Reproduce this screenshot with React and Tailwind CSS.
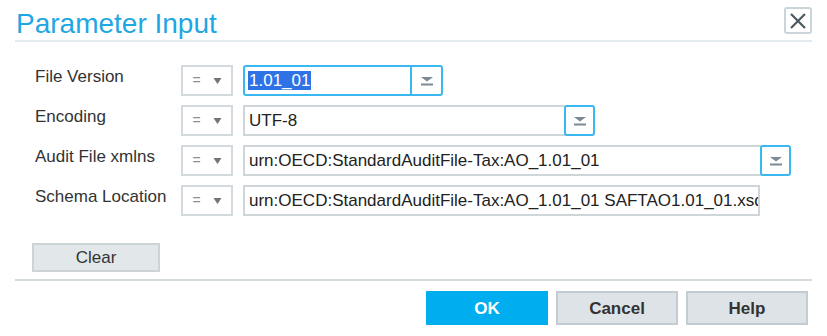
import React from 'react';

const DropIcon = () => (
  <svg width="14" height="10" viewBox="0 0 14 10">
    <polygon points="1,1 13,1 7,5.5" fill="#7b8a93" />
    <rect x="1" y="7.5" width="12" height="2" fill="#7b8a93" />
  </svg>
);

const OpSelect = () => (
  <div className="w-[52px] h-[31px] border-2 border-[#d3dade] flex items-center justify-center gap-[12px] text-[#8a8f93] text-[14px] shrink-0">
    <span>=</span>
    <svg width="9" height="8" viewBox="0 0 9 8">
      <polygon points="0.5,1 8.5,1 4.5,7" fill="#6f767a" />
    </svg>
  </div>
);

const DropButton = ({ leftBorder }) => (
  <div
    className={
      leftBorder
        ? 'w-[31px] h-full border-l-2 border-[#3ab8f0] flex items-center justify-center shrink-0'
        : 'w-[31px] h-[31px] border-2 border-[#3ab8f0] rounded-[3px] flex items-center justify-center shrink-0 -ml-[2px] bg-white'
    }
  >
    <DropIcon />
  </div>
);

const Row = ({ label, children }) => (
  <div className="flex items-start h-[31px]">
    <div className="w-[146px] pt-[3px] text-[17px] leading-none text-[#333] shrink-0">{label}</div>
    <OpSelect />
    <div className="ml-[10px] h-full flex">{children}</div>
  </div>
);

export default function App() {
  return (
    <div className="w-[827px] h-[336px] bg-white px-[15px] pt-[7px] font-['Liberation_Sans',Arial,sans-serif] overflow-hidden">
      {/* Header */}
      <div className="flex justify-between items-start h-[35px] border-b-2 border-[#e4ebee]">
        <h1 className="mt-[3px] ml-[1px] text-[28px] leading-none text-[#1fa6e4]">Parameter Input</h1>
        <button className="w-[28px] h-[27px] border-2 border-[#cad5db] rounded-[3px] flex items-center justify-center">
          <svg width="18" height="18" viewBox="0 0 18 18">
            <path d="M2 2 L16 16 M16 2 L2 16" stroke="#4b5961" strokeWidth="2.2" />
          </svg>
        </button>
      </div>

      {/* Rows */}
      <div className="pl-[20px] mt-[23px] flex flex-col gap-[9px]">
        <Row label="File Version">
          <div className="w-[200px] h-[31px] border-2 border-[#3ab8f0] rounded-[3px] flex">
            <div className="flex-1 flex items-center pl-[3px] text-[17px] leading-none">
              <span className="bg-[#2f72e6] text-white px-[1px] py-[1px]">1.01_01</span>
            </div>
            <DropButton leftBorder />
          </div>
        </Row>
        <Row label="Encoding">
          <div className="flex h-[31px]">
            <div className="w-[323px] h-full border-2 border-r-0 border-[#cfd6da] flex items-center pl-[4px] text-[17px] leading-none text-[#222]">
              UTF-8
            </div>
            <DropButton />
          </div>
        </Row>
        <Row label="Audit File xmlns">
          <div className="flex h-[31px]">
            <div className="w-[519px] h-full border-2 border-r-0 border-[#cfd6da] flex items-center pl-[4px] text-[17px] leading-none text-[#222] whitespace-nowrap overflow-hidden">
              urn:OECD:StandardAuditFile-Tax:AO_1.01_01
            </div>
            <DropButton />
          </div>
        </Row>
        <Row label="Schema Location">
          <div className="w-[517px] h-[31px] border-2 border-[#cfd6da] flex items-center pl-[4px] text-[17px] leading-none text-[#222] whitespace-nowrap overflow-hidden">
            urn:OECD:StandardAuditFile-Tax:AO_1.01_01 SAFTAO1.01_01.xsd
          </div>
        </Row>
      </div>

      {/* Clear */}
      <div className="pl-[17px] mt-[27px]">
        <button className="w-[128px] h-[29px] bg-[#e2e7ea] border-2 border-[#ccd4d8] text-[17px] leading-none text-[#333]">
          Clear
        </button>
      </div>

      {/* Footer */}
      <div className="mt-[7px] border-t-2 border-[#d3dbdf] pt-[10px] flex justify-end gap-[8px] pr-[4px]">
        <button className="w-[122px] h-[34px] bg-[#00aeef] text-white font-bold text-[17px] leading-none">OK</button>
        <button className="w-[122px] h-[34px] bg-[#dde3e6] border-2 border-[#c3ccd1] text-[#333] font-bold text-[17px] leading-none">
          Cancel
        </button>
        <button className="w-[122px] h-[34px] bg-[#dde3e6] border-2 border-[#c3ccd1] text-[#333] font-bold text-[17px] leading-none">
          Help
        </button>
      </div>
    </div>
  );
}
